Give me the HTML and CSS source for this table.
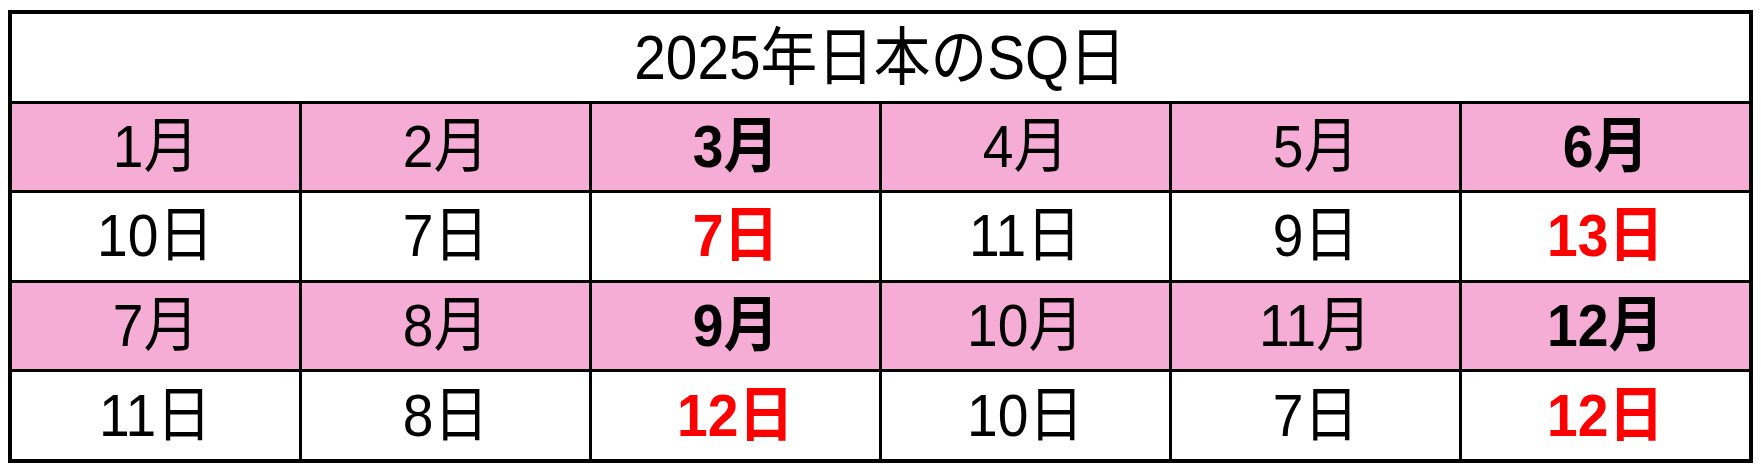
FILE: index.html
```html
<!DOCTYPE html>
<html lang="ja">
<head>
<meta charset="utf-8">
<title>2025年日本のSQ日</title>
<link rel="stylesheet" href="styles.css">
</head>
<body>
<div class="sq-table">
  <div class="cell title"><span class="txt">2025年日本のSQ日</span></div>

  <div class="cell month"><span class="txt">1月</span></div>
  <div class="cell month"><span class="txt">2月</span></div>
  <div class="cell month strong"><span class="txt">3月</span></div>
  <div class="cell month"><span class="txt">4月</span></div>
  <div class="cell month"><span class="txt">5月</span></div>
  <div class="cell month strong"><span class="txt">6月</span></div>

  <div class="cell day"><span class="txt">10日</span></div>
  <div class="cell day"><span class="txt">7日</span></div>
  <div class="cell day strong red"><span class="txt">7日</span></div>
  <div class="cell day"><span class="txt">11日</span></div>
  <div class="cell day"><span class="txt">9日</span></div>
  <div class="cell day strong red"><span class="txt">13日</span></div>

  <div class="cell month"><span class="txt">7月</span></div>
  <div class="cell month"><span class="txt">8月</span></div>
  <div class="cell month strong"><span class="txt">9月</span></div>
  <div class="cell month"><span class="txt">10月</span></div>
  <div class="cell month"><span class="txt">11月</span></div>
  <div class="cell month strong"><span class="txt">12月</span></div>

  <div class="cell day"><span class="txt">11日</span></div>
  <div class="cell day"><span class="txt">8日</span></div>
  <div class="cell day strong red"><span class="txt">12日</span></div>
  <div class="cell day"><span class="txt">10日</span></div>
  <div class="cell day"><span class="txt">7日</span></div>
  <div class="cell day strong red"><span class="txt">12日</span></div>
</div>
</body>
</html>
```

FILE: styles.css
```css
html, body {
  margin: 0;
  padding: 0;
  background: #ffffff;
}

body {
  padding: 10px 0 0 8px;
}

.sq-table {
  box-sizing: border-box;
  width: 1745px;
  height: 453px;
  display: grid;
  grid-template-columns: repeat(6, 1fr);
  grid-template-rows: repeat(5, 1fr);
  gap: 3px;
  padding: 4px;
  background: #000000;
  font-family: "Liberation Sans", "Noto Sans CJK JP", sans-serif;
  color: #000000;
}

.cell {
  display: flex;
  align-items: center;
  justify-content: center;
  background: #ffffff;
  font-size: 60px;
  line-height: 1;
  white-space: nowrap;
}

.txt {
  display: inline-block;
  transform: scaleX(0.92);
}

.title {
  grid-column: 1 / -1;
  font-size: 63px;
}

.title .txt {
  transform: scaleX(0.9);
}

.month {
  background: #f5add5;
}

.strong {
  font-weight: bold;
}

.red {
  color: #ff0000;
}
```
